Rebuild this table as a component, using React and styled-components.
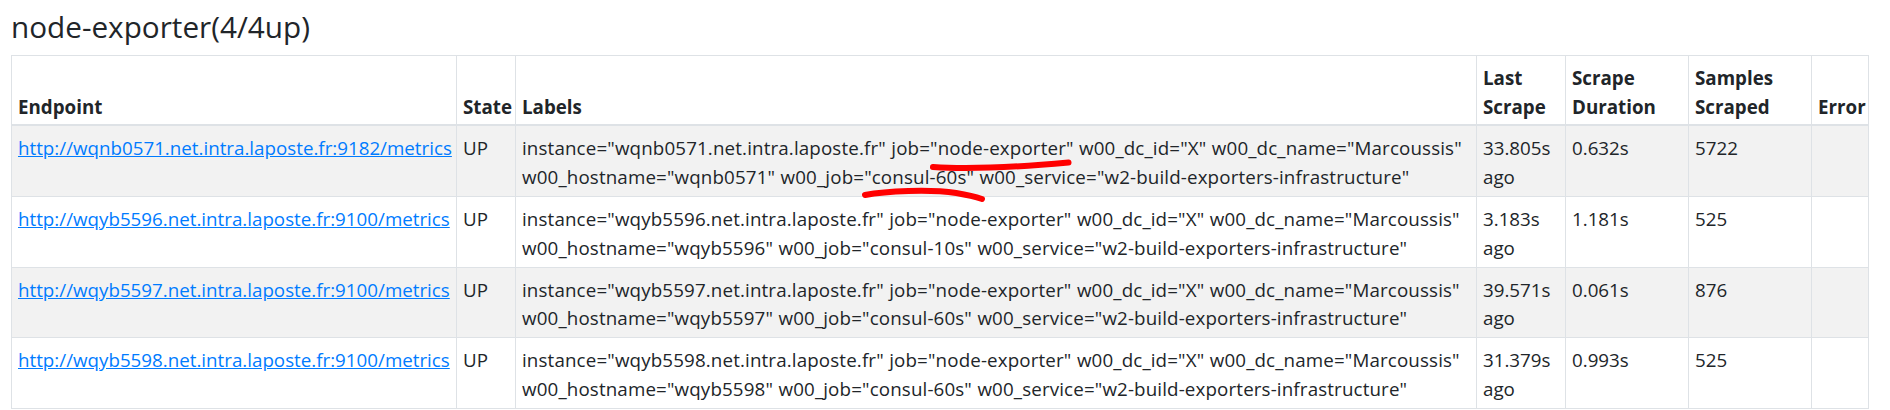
import React from 'react';
import styled, { createGlobalStyle } from 'styled-components';

const GlobalStyle = createGlobalStyle`
	body {
		margin: 0;
		background: #fff;
		color: #212529;
		font-family: 'Open Sans', 'Noto Sans', sans-serif;
		font-size: 18.75px;
		line-height: 28.8px;
	}
`;

const targets = [
	{
		url: 'http://wqnb0571.net.intra.laposte.fr:9182/metrics',
		host: 'wqnb0571',
		job: 'consul-60s',
		lastScrape: '33.805s ago',
		duration: '0.632s',
		samples: '5722',
		marked: true,
	},
	{
		url: 'http://wqyb5596.net.intra.laposte.fr:9100/metrics',
		host: 'wqyb5596',
		job: 'consul-10s',
		lastScrape: '3.183s ago',
		duration: '1.181s',
		samples: '525',
	},
	{
		url: 'http://wqyb5597.net.intra.laposte.fr:9100/metrics',
		host: 'wqyb5597',
		job: 'consul-60s',
		lastScrape: '39.571s ago',
		duration: '0.061s',
		samples: '876',
	},
	{
		url: 'http://wqyb5598.net.intra.laposte.fr:9100/metrics',
		host: 'wqyb5598',
		job: 'consul-60s',
		lastScrape: '31.379s ago',
		duration: '0.993s',
		samples: '525',
	},
];

const columns = [
	{ title: 'Endpoint', width: 445 },
	{ title: 'State', width: 59 },
	{ title: 'Labels', width: 961 },
	{ title: 'Last Scrape', width: 89 },
	{ title: 'Scrape Duration', width: 123 },
	{ title: 'Samples Scraped', width: 123 },
	{ title: 'Error', width: 57 },
];

// hand drawn red underlines, one shape per annotation
const scribbles = {
	value: { left: 3, right: 5, d: 'M0,8 C22,10 55,9 100,3.5' },
	quoted: { left: 1, right: -8, d: 'M0,7 C18,3 55,1 78,5 C88,7 95,9 100,11' },
};

export default function App() {
	return (
		<Page>
			<GlobalStyle />
			<Title>node-exporter(4/4up)</Title>

			<TargetTable>
				<colgroup>
					{columns.map((c) => (
						<col key={c.title} style={{ width: c.width }} />
					))}
				</colgroup>
				<thead>
					<tr>
						{columns.map((c) => (
							<HeadCell key={c.title}>{c.title}</HeadCell>
						))}
					</tr>
				</thead>
				<tbody>
					{targets.map((t) => (
						<TargetRow key={t.url} target={t} />
					))}
				</tbody>
			</TargetTable>
		</Page>
	);
}

const TargetRow = ({ target }) => (
	<Row>
		<Cell>
			<EndpointLink href="#">{target.url}</EndpointLink>
		</Cell>
		<Cell>UP</Cell>
		<Cell>
			<LabelLine>
				<Label name="instance" value={`${target.host}.net.intra.laposte.fr`} />
				<Label name="job" value="node-exporter" mark={target.marked && 'value'} />
				<Label name="w00_dc_id" value="X" />
				<Label name="w00_dc_name" value="Marcoussis" />
			</LabelLine>
			<LabelLine>
				<Label name="w00_hostname" value={target.host} />
				<Label name="w00_job" value={target.job} mark={target.marked && 'quoted'} />
				<Label name="w00_service" value="w2-build-exporters-infrastructure" />
			</LabelLine>
		</Cell>
		<Cell>{target.lastScrape}</Cell>
		<Cell>{target.duration}</Cell>
		<Cell>{target.samples}</Cell>
		<Cell />
	</Row>
);

const Label = ({ name, value, mark }) => {
	const quoted = `"${value}"`;

	return (
		<LabelItem>
			{name}=
			{mark ? (
				<Marked>
					{quoted}
					<Scribble shape={scribbles[mark]} />
				</Marked>
			) : (
				quoted
			)}
		</LabelItem>
	);
};

const Scribble = ({ className, shape }) => (
	<ScribbleSvg
		className={className}
		$left={shape.left}
		$right={shape.right}
		viewBox="0 0 100 12"
		preserveAspectRatio="none"
	>
		<path
			d={shape.d}
			fill="none"
			stroke="#ff0000"
			strokeWidth="6"
			strokeLinecap="round"
			vectorEffect="non-scaling-stroke"
		/>
	</ScribbleSvg>
);

const Page = styled.div`
	padding: 10px 22px 0 11px;
`;

const Title = styled.h4`
	margin: 0 0 10px;
	font-size: 29.7px;
	font-weight: 500;
	line-height: 34.8px;
	color: #212529;
`;

const TargetTable = styled.table`
	width: 1857px;
	table-layout: fixed;
	border-collapse: collapse;
	border: 1px solid #dee2e6;
`;

const HeadCell = styled.th`
	padding: 8px 5px 3px 6px;
	border: 1px solid #dee2e6;
	border-bottom-width: 2px;
	text-align: left;
	vertical-align: bottom;
	font-weight: 700;
`;

const Row = styled.tr`
	&:nth-of-type(odd) {
		background: #f2f2f2;
	}
`;

const Cell = styled.td`
	padding: 8px 5px 4px 6px;
	border: 1px solid #dee2e6;
	vertical-align: top;
`;

const EndpointLink = styled.a`
	color: #007bff;
	text-decoration: underline;
	white-space: nowrap;
`;

const LabelLine = styled.div`
	white-space: nowrap;
	letter-spacing: 0.14px;
`;

const LabelItem = styled.span`
	& + & {
		margin-left: 0.29em;
	}
`;

const Marked = styled.span`
	position: relative;
`;

const ScribbleSvg = styled.svg`
	position: absolute;
	left: ${(p) => p.$left}px;
	top: calc(100% - 1px);
	width: calc(100% - ${(p) => p.$left + p.$right}px);
	height: 12px;
	overflow: visible;
	pointer-events: none;
`;
